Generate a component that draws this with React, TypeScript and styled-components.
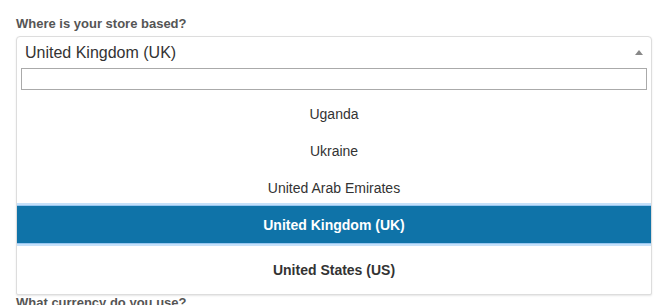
import { createGlobalStyle } from "styled-components";
import styled from "styled-components";

const GlobalStyle = createGlobalStyle`
  html, body {
    margin: 0;
    padding: 0;
    background: #fff;
    overflow: hidden;
  }
  body {
    font-family: "Liberation Sans", Arial, sans-serif;
    -webkit-font-smoothing: antialiased;
  }
`;

const Page = styled.div`
  padding: 16px 14px 0 16px;
  width: 636px;
`;

const Label = styled.div`
  font-size: 13px;
  line-height: 16px;
  font-weight: 700;
  color: #555;
  margin-bottom: 4px;
`;

const SelectBox = styled.div`
  border: 1px solid #ddd;
  border-radius: 4px 4px 2px 2px;
  background: #fff;
  box-shadow: 0 1px 2px rgba(0, 0, 0, 0.1);
`;

const Selection = styled.div`
  height: 31px;
  display: flex;
  align-items: center;
  justify-content: space-between;
  padding: 0 8px;
  font-size: 16px;
  color: #333;
`;

const Arrow = styled.span`
  width: 0;
  height: 0;
  border-style: solid;
  border-width: 0 4px 5px 4px;
  border-color: transparent transparent #888 transparent;
  margin-top: -1px;
`;

const SearchWrap = styled.div`
  padding: 0 4px;
`;

const SearchInput = styled.input`
  display: block;
  box-sizing: border-box;
  width: 100%;
  height: 22px;
  margin: 0;
  border: 1px solid #aaa;
  outline: none;
  padding: 2px 4px;
  font: inherit;
  font-size: 14px;
`;

const Options = styled.ul`
  list-style: none;
  margin: 0;
  padding: 5px 0 0;
`;

const Option = styled.li<{ $highlighted?: boolean; $bold?: boolean; $last?: boolean }>`
  box-sizing: border-box;
  height: ${(p) => (p.$last ? "51px" : "37px")};
  padding-top: ${(p) => (p.$last ? "19px" : "11px")};
  line-height: 17px;
  text-align: center;
  font-size: 14px;
  font-weight: ${(p) => (p.$bold || p.$highlighted ? 700 : 400)};
  color: ${(p) => (p.$highlighted ? "#fff" : "#333")};
  background: ${(p) => (p.$highlighted ? "#0f73a8" : "transparent")};
  box-shadow: ${(p) =>
    p.$highlighted
      ? "0 -1px 0 #98c7f1, 0 1px 0 #98c7f1, 0 -3px 0 #c6e1fa, 0 3px 0 #c6e1fa"
      : "none"};
  position: relative;
`;

const countries = [
  { name: "Uganda" },
  { name: "Ukraine" },
  { name: "United Arab Emirates" },
  { name: "United Kingdom (UK)", highlighted: true },
  { name: "United States (US)", bold: true, last: true },
];

export default function App() {
  return (
    <>
      <GlobalStyle />
      <Page>
        <Label>Where is your store based?</Label>
        <SelectBox>
          <Selection>
            <span>United Kingdom (UK)</span>
            <Arrow />
          </Selection>
          <SearchWrap>
            <SearchInput type="text" />
          </SearchWrap>
          <Options>
            {countries.map((c) => (
              <Option
                key={c.name}
                $highlighted={c.highlighted}
                $bold={c.bold}
                $last={c.last}
              >
                {c.name}
              </Option>
            ))}
          </Options>
        </SelectBox>
        <Label>What currency do you use?</Label>
      </Page>
    </>
  );
}
